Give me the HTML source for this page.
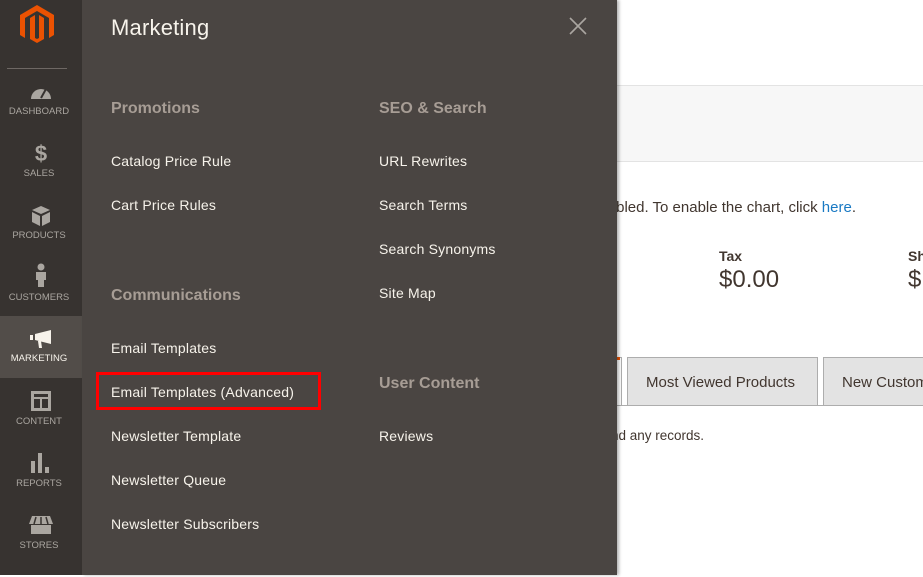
<!DOCTYPE html>
<html><head><style>
*{margin:0;padding:0;box-sizing:border-box}
body{width:923px;height:575px;overflow:hidden;background:#fff;font-family:"Liberation Sans",sans-serif;position:relative}
.side{position:absolute;left:0;top:0;width:82px;height:575px;background:#373330}
.logo{position:absolute;left:20px;top:5px}
.sep{position:absolute;left:7px;top:68px;width:60px;height:1px;background:#6e6864}
.it{position:absolute;left:0;width:82px;height:62px;text-align:center;color:#aaa6a0;font-size:9.5px;letter-spacing:0}
.it.act{background:#524d49;color:#f7f3eb}
.it svg{display:block;margin:0 auto}
.it span{position:absolute;left:-4px;right:0;top:42px}
.panel{position:absolute;left:82px;top:0;width:535px;height:575px;background:#4a4542;box-shadow:2px 0 3px rgba(0,0,0,.3)}
.p{position:absolute;color:#f7f3eb;font-size:14px;white-space:nowrap;letter-spacing:0.2px}
.h{position:absolute;color:#a79d95;font-size:16px;font-weight:bold;white-space:nowrap}
.t{position:absolute;color:#333;font-size:14px;white-space:nowrap}
.tab{position:absolute;top:357px;height:49px;background:#e3e3e3;border:1px solid #adadad;color:#41362f;font-size:15px;line-height:49px;padding-left:18px;white-space:nowrap;overflow:hidden}
</style></head><body>
<div style="position:absolute;left:617px;top:85px;width:306px;height:77px;background:#f7f7f7;border-top:1px solid #e3e3e3;border-bottom:1px solid #e3e3e3"></div>
<div class="t" style="right:67px;top:199px;font-size:15px;color:#41362f">Chart is disabled. To enable the chart, click <span style="color:#1979c3">here</span>.</div>
<div class="t" style="left:719px;top:248px;font-weight:bold;color:#41362f">Tax</div>
<div class="t" style="left:719px;top:266px;font-size:24px;color:#41362f">$0.00</div>
<div class="t" style="left:908px;top:248px;font-weight:bold;color:#41362f">Sh</div>
<div class="t" style="left:908px;top:266px;font-size:24px;color:#41362f">$</div>
<div style="position:absolute;left:600px;top:357px;width:22px;height:49px;background:#fff;border:1px solid #adadad;border-left:none;border-bottom:none"></div>
<div style="position:absolute;left:612px;top:357px;width:8px;height:3px;background:#eb5202"></div>
<div class="tab" style="left:627px;width:191px">Most Viewed Products</div>
<div class="tab" style="left:823px;width:110px">New Customers</div>
<div style="position:absolute;left:600px;top:405px;width:323px;height:1px;background:#adadad"></div>
<div class="t" style="right:219px;top:428px;font-size:13.5px;color:#41362f">We couldn't find any records.</div>

<div class="side">
<svg class="logo" width="34" height="40" viewBox="0 0 34 40"><path d="M17 0L0 10v20l5 3V13l12-7 12 7v20l5-3V10z" fill="#eb5202"/><path d="M15 10l-5 3v21l7 4 7-4V13l-5-3v23l-2 1-2-1z" fill="#eb5202"/></svg>
<div class="sep"></div>
<div class="it" style="top:81px"><svg width="24" height="20" viewBox="0 0 24 20"><path d="M2 18A10 10 0 0 1 22 18z" fill="#aaa6a0"/><path d="M12 17l5-9" stroke="#373330" stroke-width="2"/></svg><span style="top:25px">DASHBOARD</span></div>
<div class="it" style="top:143px"><div style="font-size:22px;font-weight:bold;line-height:22px">$</div><span style="top:25px">SALES</span></div>
<div class="it" style="top:205px"><svg width="20" height="22" viewBox="0 0 20 22"><path d="M10 1l9 4-9 4-9-4z M1 7l8 4v10l-8-4z M19 7l-8 4v10l8-4z" fill="#aaa6a0"/></svg><span style="top:25px">PRODUCTS</span></div>
<div class="it" style="top:263px"><svg width="12" height="24" viewBox="0 0 12 24"><circle cx="6" cy="4" r="3.5" fill="#aaa6a0"/><path d="M1 9h10v8H9v7H3v-7H1z" fill="#aaa6a0"/></svg><span style="top:29px">CUSTOMERS</span></div>
<div class="it act" style="top:316px"><svg width="24" height="22" viewBox="0 0 24 22" style="margin-top:13px"><rect x="1" y="6" width="3" height="5" fill="#f7f3eb"/><path d="M6 5l16-4v14L6 11z M9 12l3 0 1 7h-3z" fill="#f7f3eb"/></svg><span style="top:37px">MARKETING</span></div>
<div class="it" style="top:387px"><svg width="22" height="22" viewBox="0 0 22 22" style="margin-top:3px"><path d="M1 1h20v20H1z M4 4v3h14V4z M4 9v9h6V9z M12 9v9h6V9z" fill="#aaa6a0" fill-rule="evenodd"/></svg><span style="top:29px">CONTENT</span></div>
<div class="it" style="top:451px"><svg width="22" height="22" viewBox="0 0 22 22"><rect x="1" y="10" width="4" height="12" fill="#aaa6a0"/><rect x="8" y="2" width="4" height="20" fill="#aaa6a0"/><rect x="15" y="16" width="4" height="6" fill="#aaa6a0"/></svg><span style="top:27px">REPORTS</span></div>
<div class="it" style="top:515px"><svg width="26" height="20" viewBox="0 0 26 20"><path d="M4 1h18l3 8H1z" fill="#aaa6a0"/><path d="M3 10h20v9H3z" fill="#aaa6a0"/><path d="M8 2l-2 7M13 2v7M18 2l2 7" stroke="#373330" stroke-width="1.5"/></svg><span style="top:25px">STORES</span></div>
</div>

<div class="panel">
<div class="p" style="left:29px;top:15px;font-size:22px">Marketing</div>
<svg style="position:absolute;left:487px;top:17px" width="18" height="18" viewBox="0 0 18 18"><path d="M1 1l16 16M17 1L1 17" stroke="#aaa6a0" stroke-width="1.6"/></svg>
<div class="h" style="left:29px;top:100px">Promotions</div>
<div class="p" style="left:29px;top:153px">Catalog Price Rule</div>
<div class="p" style="left:29px;top:197px">Cart Price Rules</div>
<div class="h" style="left:29px;top:287px">Communications</div>
<div class="p" style="left:29px;top:340px">Email Templates</div>
<div style="position:absolute;left:14px;top:372px;width:225px;height:38px;border:3px solid #ff0000"></div>
<div class="p" style="left:29px;top:384px">Email Templates (Advanced)</div>
<div class="p" style="left:29px;top:428px">Newsletter Template</div>
<div class="p" style="left:29px;top:472px">Newsletter Queue</div>
<div class="p" style="left:29px;top:516px">Newsletter Subscribers</div>
<div class="h" style="left:297px;top:100px">SEO &amp; Search</div>
<div class="p" style="left:297px;top:153px">URL Rewrites</div>
<div class="p" style="left:297px;top:197px">Search Terms</div>
<div class="p" style="left:297px;top:241px">Search Synonyms</div>
<div class="p" style="left:297px;top:285px">Site Map</div>
<div class="h" style="left:297px;top:375px">User Content</div>
<div class="p" style="left:297px;top:428px">Reviews</div>
</div>
</body></html>
